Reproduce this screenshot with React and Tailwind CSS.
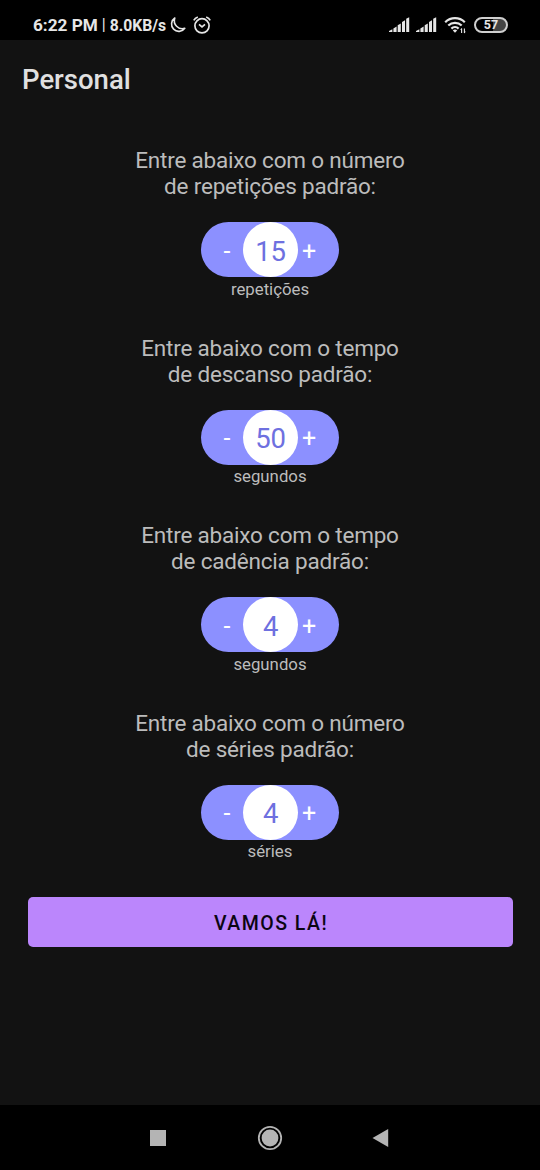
import React, { useState } from "react";

const fields = [
  { lines: ["Entre abaixo com o número", "de repetições padrão:"], unit: "repetições", initial: 15 },
  { lines: ["Entre abaixo com o tempo", "de descanso padrão:"], unit: "segundos", initial: 50 },
  { lines: ["Entre abaixo com o tempo", "de cadência padrão:"], unit: "segundos", initial: 4 },
  { lines: ["Entre abaixo com o número", "de séries padrão:"], unit: "séries", initial: 4 },
];

function Signal() {
  return (
    <svg width="21" height="16" viewBox="0 0 21 16" fill="#e6e6e6">
      <path d="M0 15V14L3.4 12.2V15Z" />
      <path d="M4.4 15V11.4L7.6 9.6V15Z" />
      <path d="M8.7 15V8.2L11.8 6.6V15Z" />
      <path d="M13 15V5L16 3.2V15Z" />
      <path d="M17.2 15V1.8L20.2 0.2V15Z" />
    </svg>
  );
}

function Wifi() {
  return (
    <svg className="ml-[7px]" width="23" height="18" viewBox="0 0 23 18" fill="none" stroke="#e6e6e6" strokeWidth="2.2">
      <path d="M1.2 6.2A14 14 0 0 1 20.8 6.2" />
      <path d="M4.3 9.5A9.6 9.6 0 0 1 17.7 9.5" />
      <path d="M7.4 12.6A5.2 5.2 0 0 1 14.6 12.6" />
      <path d="M8.8 14.4Q11 12.8 13.2 14.4L11 16.7Z" fill="#e6e6e6" stroke="none" />
      <path d="M17.6 12.5V17M20.4 12.5V17" strokeWidth="1.1" />
      <path d="M16.2 14L17.6 12L18 14ZM20 15.5H21.8L20.4 17.5Z" fill="#e6e6e6" stroke="none" />
    </svg>
  );
}

function Battery() {
  return (
    <div className="ml-[7px] flex h-4 w-[34px] items-center justify-center rounded-full border-2 border-[#cfcfcf] bg-linear-to-r from-black from-55% to-[#444] to-55% text-[12.5px] leading-none font-bold text-[#e6e6e6]">
      57
    </div>
  );
}

function StatusBar() {
  return (
    <div className="flex h-10 shrink-0 items-center justify-between bg-black pt-[10px] pr-8 pl-[33px] text-[#e6e6e6]">
      <div className="flex items-center">
        <span className="pt-px text-[17.2px] font-bold">6:22 PM</span>
        <span className="ml-1 text-[16px]">|</span>
        <span className="ml-1 pt-px text-[15.7px] font-bold">8.0KB/s</span>
        <svg className="ml-[3px]" width="17" height="18" viewBox="0 0 17 18" fill="none" stroke="#e6e6e6" strokeWidth="1.6" strokeLinejoin="round">
          <path d="M5.8 2A7.3 7.3 0 1 0 15.8 12.3A8 8 0 0 1 5.8 2Z" />
        </svg>
        <svg className="ml-[6px]" width="20" height="20" viewBox="0 0 20 20" fill="none" stroke="#e6e6e6" strokeWidth="1.7">
          <circle cx="10" cy="10.8" r="7.1" />
          <path d="M1.8 5.3Q3 3 5.8 2M18.2 5.3Q17 3 14.2 2M7 9.4L10 11.9L13 9.4" />
        </svg>
      </div>
      <div className="flex items-center">
        <Signal />
        <span className="w-[6px]" />
        <Signal />
        <Wifi />
        <Battery />
      </div>
    </div>
  );
}

function Stepper({ lines, unit, initial }) {
  const [value, setValue] = useState(initial);

  return (
    <div className="flex h-[187.5px] flex-col items-center">
      <div className="text-center text-[22.5px] leading-[26.2px] tracking-[-0.2px] text-[#bcbcbc]">
        {lines.map((line) => (
          <div key={line}>{line}</div>
        ))}
      </div>
      <div className="mt-[22.6px] flex h-[55px] w-[138px] items-center rounded-full bg-[#8c90ff] text-[25px] text-white">
        <button className="w-[42px] pt-1 pl-2.5" onClick={() => setValue(value - 1)}>-</button>
        <div className="flex size-[55px] items-center justify-center rounded-full bg-white pt-1 text-[27.5px] tracking-[-0.3px] text-[#6e70e0]">
          {value}
        </div>
        <button className="w-[41px] pt-1 pr-[19px]" onClick={() => setValue(value + 1)}>+</button>
      </div>
      <div className="mt-[1.8px] text-[16.8px] leading-5 text-[#bcbcbc]">{unit}</div>
    </div>
  );
}

function NavBar() {
  return (
    <div className="mt-auto flex h-[65px] items-center justify-between bg-black pr-[151px] pl-[150px] text-[#b4b4b4]">
      <div className="size-4 bg-current" />
      <svg className="ml-0.5" width="26" height="26" viewBox="0 0 26 26" fill="none" stroke="currentColor">
        <circle cx="13" cy="13" r="11.2" strokeWidth="1.8" />
        <circle cx="13" cy="13" r="8.4" fill="currentColor" stroke="none" />
      </svg>
      <svg width="17" height="18" viewBox="0 0 17 18" fill="currentColor">
        <path d="M0.5 9L16.2 0V18Z" />
      </svg>
    </div>
  );
}

export default function App() {
  return (
    <div className="flex h-[1170px] w-[540px] flex-col bg-[#121212] font-[Roboto,sans-serif]">
      <StatusBar />
      <h1 className="h-[107px] pt-6 pl-[22px] text-[27.5px] leading-8 font-medium text-[#e0e0e0]">Personal</h1>
      {fields.map((field) => (
        <Stepper key={field.lines[1]} {...field} />
      ))}
      <button className="mx-[27.5px] h-[50px] rounded-[5px] bg-[#bb86fc] pt-[3px] pl-0.5 text-[19.5px] font-medium tracking-[1.5px] text-[#0b0512]">
        VAMOS LÁ!
      </button>
      <NavBar />
    </div>
  );
}
